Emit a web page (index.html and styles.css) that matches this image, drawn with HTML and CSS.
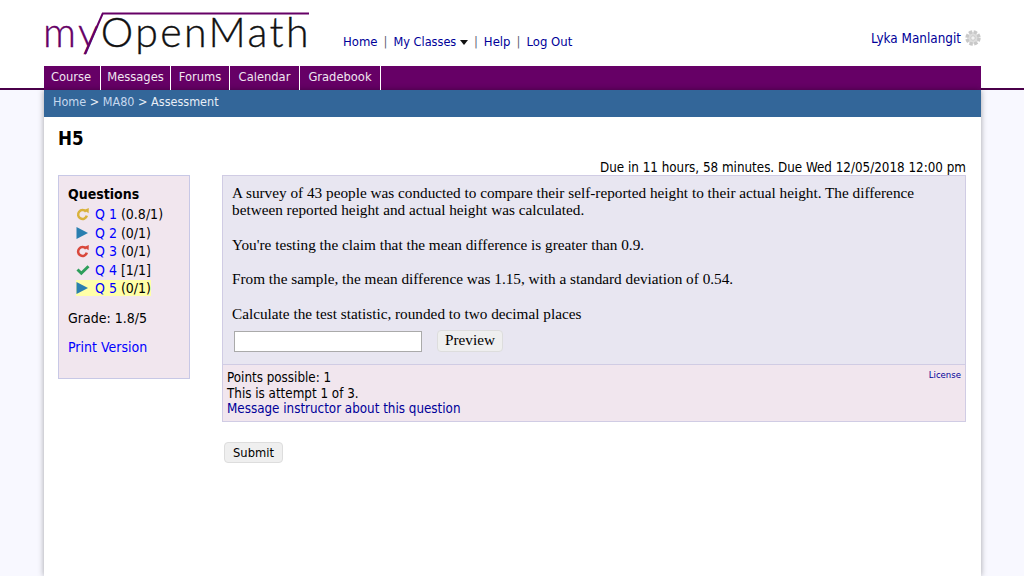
FILE: index.html
```html
<!DOCTYPE html>
<html lang="en">
<head>
<meta charset="utf-8">
<title>H5</title>
<link rel="stylesheet" href="styles.css">
</head>
<body>
<header class="top">
  <div class="logo"><span class="logo-my">my</span><span class="logo-om">OpenMath</span>
    <svg class="logo-slash" width="270" height="46" viewBox="0 0 270 46"><path d="M41 42 L58.700 1.500 H265" fill="none" stroke="#660066" stroke-width="2"/></svg>
  </div>
  <nav class="toplinks">
    <a href="#">Home</a><span class="sep">|</span><a class="narrow" href="#">My Classes <svg class="caret" width="8" height="5" viewBox="0 0 8 5"><path d="M0 0H8L4 5Z" fill="#111"/></svg></a><span class="sep">|</span><a href="#">Help</a><span class="sep">|</span><a href="#">Log Out</a>
  </nav>
  <div class="user"><a href="#">Lyka Manlangit</a>
    <svg class="gear" width="16" height="16" viewBox="0 0 16 16"><circle cx="8" cy="8" r="6" fill="#e0e0e0" stroke="#c8c8c8" stroke-width="3.400" stroke-dasharray="3.300 1.400"/><circle cx="8" cy="8" r="4" fill="#dcdcdc"/><circle cx="8" cy="8" r="2.200" fill="#f2f2f2" stroke="#c4c4c4" stroke-width=".8"/></svg>
  </div>
</header>
<div class="navrow">
  <ul class="tabs">
    <li><a href="#">Course</a></li><li><a href="#">Messages</a></li><li><a href="#">Forums</a></li><li><a href="#">Calendar</a></li><li><a href="#">Gradebook</a></li>
  </ul>
</div>
<main class="page">
  <div class="crumb"><a href="#">Home</a> &gt; <a href="#">MA80</a> &gt; <span>Assessment</span></div>
  <div class="content">
    <h1>H5</h1>
    <div class="due">Due in 11 hours, 58 minutes. Due Wed 12/05/2018 12:00 pm</div>
    <div class="cols">
      <aside class="side">
        <h2>Questions</h2>
        <ul class="qlist">
          <li><svg width="14" height="14" viewBox="0 0 14 14"><path d="M10.800 8.600A4.400 4.400 0 1 1 10 4.800" fill="none" stroke="#d9b23c" stroke-width="2.500"/><path d="M8 3L12.800 1 12.600 6.300z" fill="#d9b23c"/></svg><a href="#">Q 1</a> (0.8/1)</li>
          <li><svg width="14" height="14" viewBox="0 0 14 14"><path d="M0.500 1L12 7 0.500 13z" fill="#2a7fb0"/></svg><a href="#">Q 2</a> (0/1)</li>
          <li><svg width="14" height="14" viewBox="0 0 14 14"><path d="M10.800 8.600A4.400 4.400 0 1 1 10 4.800" fill="none" stroke="#d9483c" stroke-width="2.500"/><path d="M8 3L12.800 1 12.600 6.300z" fill="#d9483c"/></svg><a href="#">Q 3</a> (0/1)</li>
          <li><svg width="15" height="14" viewBox="0 0 15 14"><path d="M0.500 7.500L2.700 5.300 5.700 8.300 12.300 1.800 14.500 4 5.700 12.700z" fill="#2e9e5b"/></svg><a href="#">Q 4</a> [1/1]</li>
          <li class="cur"><svg width="14" height="14" viewBox="0 0 14 14"><path d="M0.500 1L12 7 0.500 13z" fill="#2a7fb0"/></svg><a href="#">Q 5</a> (0/1)</li>
        </ul>
        <p class="grade">Grade: 1.8/5</p>
        <p class="print"><a href="#">Print Version</a></p>
      </aside>
      <section class="main">
        <div class="question">
          <p>A survey of 43 people was conducted to compare their self-reported height to their actual height. The difference between reported height and actual height was calculated.</p>
          <p>You're testing the claim that the mean difference is greater than 0.9.</p>
          <p>From the sample, the mean difference was 1.15, with a standard deviation of 0.54.</p>
          <p class="last">Calculate the test statistic, rounded to two decimal places</p>
          <div class="answer"><input type="text" class="ans"><button type="button" class="preview">Preview</button></div>
        </div>
        <div class="qfoot">
          <a class="license" href="#">License</a>
          <div>Points possible: 1</div>
          <div>This is attempt 1 of 3.</div>
          <div><a href="#">Message instructor about this question</a></div>
        </div>
        <button type="button" class="submit">Submit</button>
      </section>
    </div>
  </div>
</main>
</body>
</html>
```
FILE: styles.css
```css
* { box-sizing: border-box; }
html, body { height: 100%; }
body {
  margin: 0;
  background: #f8f8ff;
  font-family: "DejaVu Sans Condensed", "DejaVu Sans", sans-serif;
  font-size: 14px;
  color: #000;
  overflow: hidden;
}
a { text-decoration: none; color: #0000cc; }

.top {
  height: 66px;
  background: #fff;
  display: flex;
  align-items: flex-start;
  padding-left: 43px;
}
.logo {
  position: relative;
  width: 300px;
  height: 66px;
  padding-top: 7px;
  font-family: "Lato", sans-serif;
  font-weight: 300;
  font-size: 41px;
  line-height: 50px;
  letter-spacing: 2.400px;
  -webkit-text-stroke: .35px currentColor;
  white-space: nowrap;
}
.logo-my { color: #660066; }
.logo-om { color: #111; }
.logo-slash { position: absolute; left: 1px; top: 12px; }
.toplinks {
  padding-top: 33px;
  font-size: 13px;
  line-height: 18px;
  color: #000099;
  white-space: nowrap;
}
.toplinks a { color: #000099; }
.toplinks .narrow { font-size: 12.600px; }
.sep { margin: 0 6px; color: #667; }
.caret { vertical-align: 1px; }
.user {
  margin-left: auto;
  width: 153px;
  padding-top: 30px;
  display: flex;
  align-items: center;
  gap: 4px;
  font-size: 13.400px;
  line-height: 18px;
  white-space: nowrap;
}
.user a { color: #000099; }
.gear { margin-top: -2px; }

.navrow {
  height: 24px;
  background: #fff;
  border-bottom: 2px solid #4a004a;
  padding: 0 43px 0 44px;
}
.tabs {
  list-style: none;
  margin: 0;
  padding: 0;
  height: 24px;
  background: #660066;
  display: grid;
  grid-template-columns: 57px 70px 59px 70px 81px;
  font-size: 12.800px;
}
.tabs li { border-right: 1px solid #fff; text-align: center; }
.tabs li:first-child { padding-right: 2px; }
.tabs a {
  display: block;
  line-height: 22px;
  color: #f0e6f0;
}

.page {
  margin: 0 43px 0 44px;
  height: 486px;
  background: #fff;
  box-shadow: 0 0 6px rgba(0, 0, 0, .35);
}
.crumb {
  height: 27px;
  background: #336699;
  padding: 0 9px;
  font-size: 12.500px;
  line-height: 24px;
  color: #e8eef6;
}
.crumb a { color: #c6d8ee; }
.content { padding: 0 15px 0 14px; }
h1 {
  margin: 0;
  padding-top: 10px;
  font-size: 18.600px;
  line-height: 24px;
  font-weight: 700;
}
.due {
  margin-top: 9px;
  text-align: right;
  font-size: 13.300px;
  line-height: 15px;
}
.cols { display: flex; gap: 32px; }
.side {
  width: 132px;
  height: 204px;
  flex: none;
  padding: 7px 9px 9px;
  background: #f1e6ee;
  border: 1px solid #c8c8e6;
}
.side h2 { margin: 0; font-size: 14px; line-height: 22px; font-weight: 700; }
.qlist { list-style: none; margin: 0; padding: 0 0 0 8px; }
.qlist li { height: 18.500px; line-height: 18.500px; white-space: nowrap; display: flex; align-items: center; width: max-content; }
.qlist svg { width: 14px; margin-right: 5px; flex: none; }
.qlist a { color: #0000ff; margin-right: 4px; }
.qlist .cur { background: linear-gradient(#ffffa8, #ffffa8) center / 100% 16px no-repeat; }
.grade { margin: 11px 0 0; line-height: 18px; }
.print { margin: 11px 0 0; line-height: 18px; }
.print a { color: #0000ff; }

.main { flex: 1; min-width: 0; }
.question {
  height: 189px;
  padding: 8px 9px 0;
  background: #e8e6f1;
  border: 1px solid #d0cce4;
  border-bottom: 0;
  font-family: "Liberation Serif", serif;
  font-size: 15.250px;
  line-height: 17.250px;
}
.question p { margin: 0 0 17.250px; }
.question p.last { margin-bottom: 0; }
.answer { display: flex; align-items: center; margin-top: 8px; padding-left: 2px; }
.ans {
  width: 188px;
  height: 21px;
  background: #fff;
  border: 1px solid #aaa;
  padding: 0;
}
.preview {
  margin-left: 15px;
  height: 22px;
  width: 66px;
  padding: 0 0 2px;
  background: #efefef;
  border: 1px solid #ddd;
  border-radius: 4px;
  font: 15.200px "Liberation Serif", serif;
  color: #000;
}
.qfoot {
  position: relative;
  height: 58px;
  padding: 5px 4px 0;
  background: #f1e6ee;
  border: 1px solid #d0cce4;
  font-size: 13.300px;
  line-height: 15.700px;
}
.qfoot a { color: #000099; }
.qfoot .license { position: absolute; right: 4px; top: 3px; font-size: 9.500px; line-height: 13px; }
.submit {
  margin: 20px 0 0 2px;
  width: 59px;
  height: 21px;
  padding: 0;
  background: #efefef;
  border: 1px solid #ddd;
  border-radius: 4px;
  font: 12.800px "DejaVu Sans Condensed", sans-serif;
  color: #000;
}
```
